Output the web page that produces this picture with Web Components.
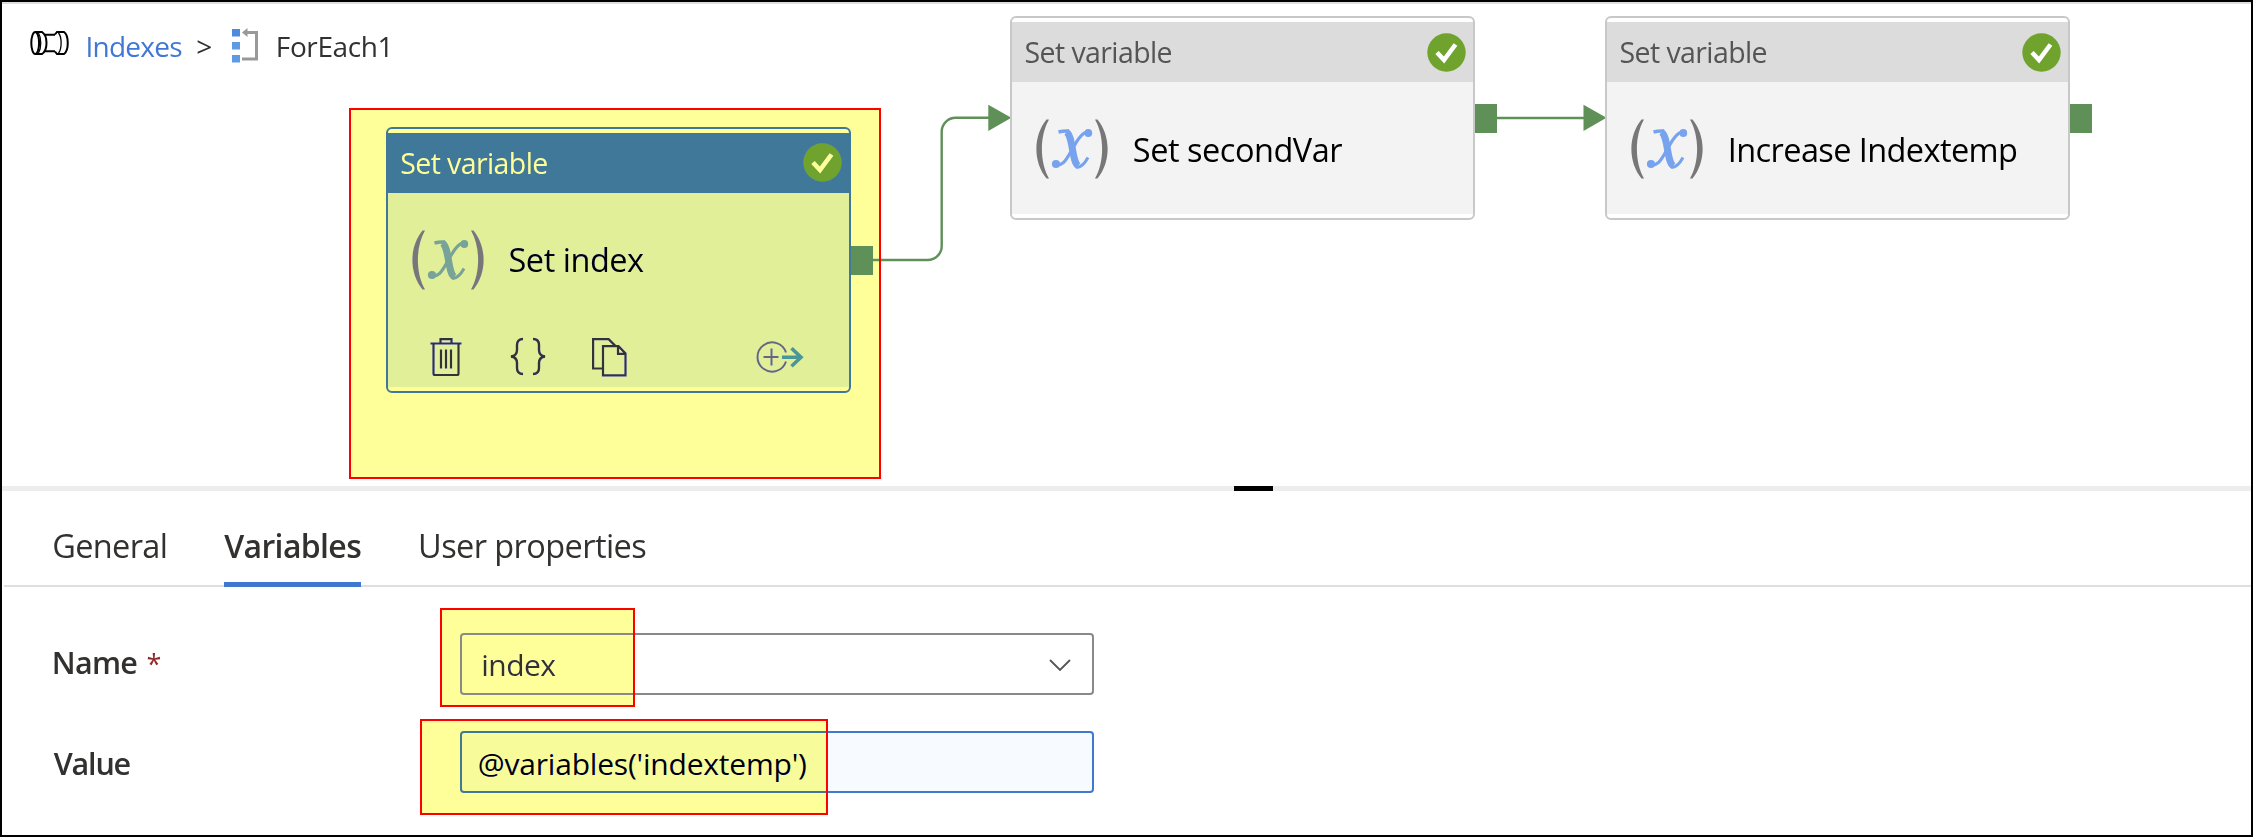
<!DOCTYPE html>
<html lang="en">
<head>
<meta charset="utf-8">
<title>Indexes - ForEach1</title>
<style>
    body {
        margin: 0;
        font-family: "Open Sans", "Noto Sans", sans-serif;
        color: #323130;
    }
</style>
</head>
<body>
<pipeline-app>
    <pipeline-canvas slot="canvas">
        <bread-crumb></bread-crumb>
        <canvas-links></canvas-links>
        <activity-node type="Set variable" name="Set index" selected style="left: 384px; top: 122.5px"></activity-node>
        <activity-node type="Set variable" name="Set secondVar" style="left: 1008.3px; top: 12px"></activity-node>
        <activity-node type="Set variable" name="Increase Indextemp" style="left: 1603.3px; top: 12px; --name-spacing: -0.6px"></activity-node>
        <high-light style="left: 347px; top: 104px; width: 532px; height: 371px"></high-light>
    </pipeline-canvas>
    <tab-bar slot="panel">
        <tab-item style="letter-spacing: -0.65px">General</tab-item>
        <tab-item active>Variables</tab-item>
        <tab-item style="letter-spacing: -0.58px">User properties</tab-item>
    </tab-bar>
    <property-form slot="panel">
        <form-row label="Name" required>
            <select-field value="index"></select-field>
            <high-light style="left: -20px; top: -25px; width: 195px; height: 99px"></high-light>
        </form-row>
        <form-row label="Value" style="--label-spacing: -1.2px; --label-shift: 3px; --label-line: 64px">
            <text-field value="@variables('indextemp')"></text-field>
            <high-light style="left: -40px; top: -12px; width: 408px; height: 96px"></high-light>
        </form-row>
    </property-form>
</pipeline-app>

<script>
// Small base class, every element only has to supply its template
class BaseElement extends HTMLElement {
    constructor() {
        super();
        this.attachShadow({ mode: 'open' });
    }

    connectedCallback() {
        this.shadowRoot.innerHTML = this.template();
        this.render();
    }

    render() {}
}

// Window frame with the canvas on top and the property panel below
class PipelineApp extends BaseElement {
    template() {
        return `
            <style>
                :host {
                    display: flex;
                    flex-direction: column;
                    box-sizing: border-box;
                    width: 2253px;
                    height: 837px;
                    border: 2px solid #000;
                    background: #fff;
                    overflow: hidden;
                }
                .splitter {
                    flex: none;
                    display: flex;
                    height: 5px;
                    background: #ededed;
                }
                .handle {
                    width: 39px;
                    margin-left: 1232px;
                    background: #000;
                }
                .panel {
                    flex: 1;
                }
            </style>
            <slot name="canvas"></slot>
            <div class="splitter"><div class="handle"></div></div>
            <div class="panel"><slot name="panel"></slot></div>
        `;
    }
}

class PipelineCanvas extends BaseElement {
    template() {
        return `
            <style>
                :host {
                    display: block;
                    position: relative;
                    flex: none;
                    height: 482px;
                    border-top: 2px solid #e1dfdd;
                }
            </style>
            <slot></slot>
        `;
    }
}

class BreadCrumb extends BaseElement {
    template() {
        return `
            <style>
                :host {
                    display: flex;
                    align-items: center;
                    height: 84px;
                    padding-left: 28px;
                    font-size: 28px;
                    line-height: 40px;
                }
                svg { flex: none; }
                .pipe { margin-bottom: 6px; }
                .link { margin-left: 15.5px; color: #4078d4; letter-spacing: -0.75px; }
                .sep { margin-left: 14.5px; }
                .loop { margin: 0 17px 2px 18.5px; }
                .current { letter-spacing: -0.4px; }
            </style>
            <svg class="pipe" width="40" height="26" viewBox="0 0 40 26" fill="#fff" stroke="#000" stroke-width="2">
                <path d="M15 4.700h10M15 21.300h10" />
                <path d="M5 2h7c6 4 6 18 0 22H5" />
                <ellipse cx="5.200" cy="13" rx="3.900" ry="11" />
                <path d="M25 4.500L27 2h7c5 3.500 5 18.500 0 22h-7l-2-2.500" />
                <path d="M28.500 3c3.500 4 3.500 16 0 20M8.500 3c3 5 3 15 0 20" fill="none" stroke-width="1.300" />
            </svg>
            <span class="link">Indexes</span>
            <span class="sep">&gt;</span>
            <svg class="loop" width="28" height="36" viewBox="0 0 28 36">
                <path fill="#4f8bdc" d="M1 2h8v7.500H1z" />
                <path fill="#5e9be2" d="M1 15h8v7.500H1zM1 28h8v7.500H1z" />
                <path fill="#999" d="M11 5.500L16.500 1v3H27v29.500H11v-3h13V7h-7.500v3z" />
            </svg>
            <span class="current">ForEach1</span>
        `;
    }
}

// Green success connectors between the activities
class CanvasLinks extends BaseElement {
    template() {
        return `
            <style>
                :host {
                    display: block;
                    position: absolute;
                    left: 0;
                    top: 0;
                }
                svg { display: block; }
            </style>
            <svg width="2249" height="482" viewBox="2 4 2249 482">
                <path fill="none" stroke="#5e9058" stroke-width="2.400"
                    d="M873 260h54.700a14 14 0 0 0 14-14V131.700a14 14 0 0 1 14-14H990M1497 118h88" />
                <path fill="#5e9058" d="M988.300 104.700l23 13-23 13.300zM1583.500 104.700l23 13-23 13.300z" />
            </svg>
        `;
    }
}

class ActivityNode extends BaseElement {
    template() {
        return `
            <style>
                :host {
                    --accent: #c8c8c8;
                    --head: #dcdcdc;
                    --head-text: #555;
                    --fill: #f3f3f3;
                    display: block;
                    position: absolute;
                    width: 465.2px;
                }
                :host([selected]) {
                    --accent: #4078c8;
                    --head: #4078c8;
                    --head-text: #fff;
                    --fill: #e1efff;
                }
                .card {
                    padding: 4px 0;
                    border: 2px solid var(--accent);
                    border-radius: 6px;
                    background: #fff;
                }
                .head {
                    display: flex;
                    align-items: center;
                    justify-content: space-between;
                    height: 60px;
                    padding: 0 7.2px 0 12.3px;
                    background: var(--head);
                    color: var(--head-text);
                    font-size: 28.5px;
                    line-height: 60px;
                    letter-spacing: -0.6px;
                }
                .body {
                    height: 132px;
                    background: var(--fill);
                }
                :host([selected]) .body { height: 194.5px; }
                .title {
                    display: flex;
                    align-items: center;
                    height: 134px;
                    padding-left: 24px;
                    color: #000;
                    font-size: 32.5px;
                    letter-spacing: var(--name-spacing, -0.47px);
                }
                .title svg { margin-right: 22.5px; }
                .actions {
                    display: none;
                    align-items: center;
                    height: 60px;
                    padding: 0 44px 0 41.5px;
                }
                :host([selected]) .actions { display: flex; }
                .braces { margin-left: 48px; }
                .copy { margin-left: 45px; }
                .next { margin-left: auto; }
                svg { flex: none; }
                .port {
                    position: absolute;
                    left: 100%;
                    top: 87.5px;
                    width: 21.5px;
                    height: 29px;
                    background: #5e9058;
                }
                :host([selected]) .port { top: 119px; }
            </style>
            <div class="card">
                <div class="head">
                    <span class="type"></span>
                    <svg width="39" height="39" viewBox="0 0 39 39">
                        <circle cx="19.500" cy="19.500" r="19.200" fill="#70a22e" />
                        <path d="M10 19.500l7 7.500 11.500-15.500" fill="none" stroke="#fff" stroke-width="4.600" />
                    </svg>
                </div>
                <div class="body">
                    <div class="title">
                        <svg width="74" height="60" viewBox="0 0 74 60">
                            <path fill="#777" d="M10.500 0.500h2.500C3.500 17 3.500 43 13 59.500h-2.500C-3 43-3 17 10.500 0.500zM61.500 0.500H59C68.500 17 68.500 43 59 59.500h2.500C75 43 75 17 61.500 0.500z" />
                            <g fill="none" stroke="#77a3ee" stroke-linejoin="round">
                                <path d="M22.500 13c3-.8 7-1.200 10.500-1" stroke-width="3.400" />
                                <path d="M30.500 13c7 5 5 30 12 34" stroke-width="7" />
                                <path d="M41 48.500c4.500-.5 8-4.500 11-10" stroke-width="3" />
                                <path d="M53 13c-11-1-18 24-25.500 30.500-2.500 2-4.500 3-7 2" stroke-width="3.200" />
                            </g>
                            <circle cx="52.300" cy="14" r="3.900" fill="#77a3ee" />
                            <circle cx="20" cy="45" r="4.100" fill="#77a3ee" />
                        </svg>
                        <span class="name"></span>
                    </div>
                    <div class="actions">
                        <svg width="32" height="40" viewBox="0 0 32 40" fill="none" stroke="#323238" stroke-width="2.200">
                            <path d="M0.500 6.500h31M10.500 6V2.100h11V6M3.500 7v29.500q0 1.500 1.500 1.500h22q1.500 0 1.500-1.500V7M11 12.500v19M16 12.500v19M21 12.500v19" />
                        </svg>
                        <svg class="braces" width="36" height="40" viewBox="0 0 36 40" fill="none" stroke="#323238" stroke-width="2.400">
                            <path d="M13 2c-4 0-6 2-6 6v5c0 4-2 6-6 6.500 4 .5 6 2.500 6 6.500v5c0 4 2 6 6 6M23 2c4 0 6 2 6 6v5c0 4 2 6 6 6.500-4 .5-6 2.500-6 6.500v5c0 4-2 6-6 6" />
                        </svg>
                        <svg class="copy" width="36" height="40" viewBox="0 0 36 40" fill="none" stroke="#323238" stroke-width="2.200">
                            <path d="M11 31.500H2.100V2.100h15.500l7 7M12 9.200h15.500l7 7.300v21.900H12zM27 9.200v7.600h7.500" />
                        </svg>
                        <svg class="next" width="49" height="34" viewBox="0 0 49 34" fill="none">
                            <path d="M30 12.500A14.600 14.600 0 1 0 30 21.500M15.500 8.500v17M7.500 17H22.500" stroke="#66667c" stroke-width="2" />
                            <path d="M26 17.200H45M35.500 8.200l9.500 9-9.500 9" stroke="#4a97b0" stroke-width="3.600" />
                        </svg>
                    </div>
                </div>
            </div>
            <div class="port"></div>
        `;
    }

    render() {
        this.shadowRoot.querySelector('.type').textContent = this.getAttribute('type');
        this.shadowRoot.querySelector('.name').textContent = this.getAttribute('name');
    }
}

// Yellow marker with a red outline. The fill only darkens what lies under it,
// so the host must not create a stacking context of its own.
class HighLight extends BaseElement {
    template() {
        return `
            <style>
                :host {
                    display: block;
                    position: absolute;
                }
                .fill, .outline {
                    position: absolute;
                    inset: 0;
                }
                .fill {
                    background: #ffff99;
                    mix-blend-mode: darken;
                }
                .outline { border: 2px solid #f00; }
            </style>
            <div class="fill"></div>
            <div class="outline"></div>
        `;
    }
}

class TabBar extends BaseElement {
    template() {
        return `
            <style>
                :host {
                    display: flex;
                    gap: 57px;
                    height: 96px;
                    box-sizing: border-box;
                    padding: 17px 0 0 50.2px;
                    background: linear-gradient(#dfdfdf, #dfdfdf) 2px 100% / 100% 2.500px no-repeat;
                }
            </style>
            <slot></slot>
        `;
    }
}

class TabItem extends BaseElement {
    template() {
        return `
            <style>
                :host {
                    display: block;
                    box-sizing: border-box;
                    height: 79px;
                    font-size: 32.5px;
                    line-height: 76px;
                    border-bottom: 5px solid transparent;
                }
                :host([active]) {
                    font-size: 32px;
                    font-weight: 600;
                    letter-spacing: -0.65px;
                    border-bottom-color: #4078d0;
                }
            </style>
            <slot></slot>
        `;
    }
}

class PropertyForm extends BaseElement {
    template() {
        return `
            <style>
                :host {
                    display: flex;
                    flex-direction: column;
                    gap: 36px;
                    padding: 46px 0 0 48.8px;
                }
            </style>
            <slot></slot>
        `;
    }
}

class FormRow extends BaseElement {
    template() {
        return `
            <style>
                :host {
                    display: flex;
                    height: 62px;
                }
                .label {
                    width: 409.2px;
                    box-sizing: border-box;
                    padding-left: var(--label-shift, 1px);
                    font-size: 30.5px;
                    font-weight: 600;
                    line-height: var(--label-line, 59px);
                    letter-spacing: var(--label-spacing, -0.75px);
                }
                .star {
                    margin-left: 9.5px;
                    color: #8f2a2a;
                    font-size: 27px;
                    font-weight: 400;
                }
                .control {
                    position: relative;
                    width: 634px;
                }
            </style>
            <div class="label"></div>
            <div class="control"><slot></slot></div>
        `;
    }

    render() {
        const label = this.shadowRoot.querySelector('.label');
        label.textContent = this.getAttribute('label');
        if (this.hasAttribute('required')) {
            const star = document.createElement('span');
            star.className = 'star';
            star.textContent = '*';
            label.append(star);
        }
    }
}

class SelectField extends BaseElement {
    template() {
        return `
            <style>
                :host {
                    display: flex;
                    align-items: center;
                    justify-content: space-between;
                    box-sizing: border-box;
                    height: 62px;
                    padding: 1px 21px 0 19.2px;
                    border: 2px solid #898989;
                    border-radius: 4px;
                    font-size: 30px;
                    line-height: 57px;
                    letter-spacing: -0.5px;
                }
            </style>
            <span class="value"></span>
            <svg width="22" height="14" viewBox="0 0 22 14" fill="none" stroke="#555" stroke-width="1.800">
                <path d="M1 2l10 10L21 2" />
            </svg>
        `;
    }

    render() {
        this.shadowRoot.querySelector('.value').textContent = this.getAttribute('value');
    }
}

class TextField extends BaseElement {
    template() {
        return `
            <style>
                :host {
                    display: block;
                    box-sizing: border-box;
                    height: 62px;
                    padding-left: 15.8px;
                    border: 2px solid #4078d0;
                    border-radius: 4px;
                    background: #f7fbff;
                    color: #000;
                    font-size: 30px;
                    line-height: 61px;
                    letter-spacing: -0.2px;
                }
            </style>
            <span class="value"></span>
        `;
    }

    render() {
        this.shadowRoot.querySelector('.value').textContent = this.getAttribute('value');
    }
}

customElements.define('pipeline-app', PipelineApp);
customElements.define('pipeline-canvas', PipelineCanvas);
customElements.define('bread-crumb', BreadCrumb);
customElements.define('canvas-links', CanvasLinks);
customElements.define('activity-node', ActivityNode);
customElements.define('high-light', HighLight);
customElements.define('tab-bar', TabBar);
customElements.define('tab-item', TabItem);
customElements.define('property-form', PropertyForm);
customElements.define('form-row', FormRow);
customElements.define('select-field', SelectField);
customElements.define('text-field', TextField);
</script>
</body>
</html>
